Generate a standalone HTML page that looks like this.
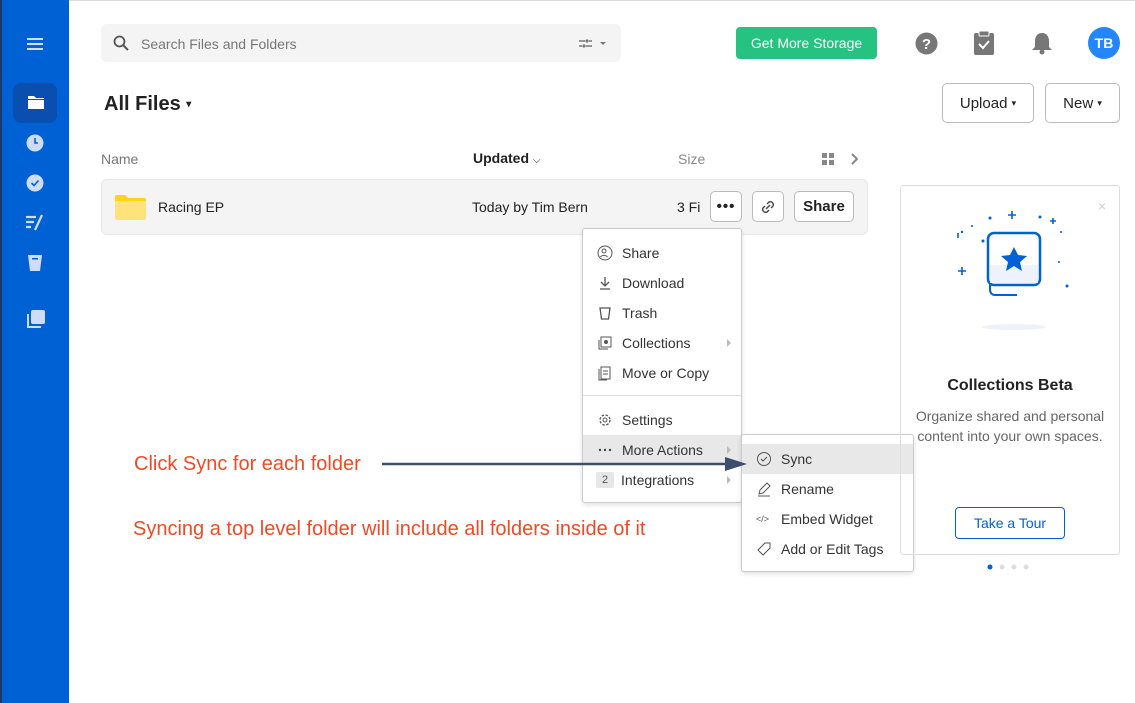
<!DOCTYPE html>
<html><head><meta charset="utf-8"><style>
*{box-sizing:border-box;margin:0;padding:0}
body{width:1135px;height:703px;overflow:hidden;background:#fff;font-family:"Liberation Sans",sans-serif;color:#222;position:relative}
.abs{position:absolute}
.side{left:0;top:0;width:69px;height:703px;background:#0061d5;border-left:2px solid #1a3a6a}
.topline{left:69px;top:0;width:1066px;height:3px;border-top:1px solid #ddd}
.search{left:101px;top:24px;width:520px;height:38px;background:#f4f4f4;border-radius:6px}
.btn{border:1px solid #bbb;border-radius:5px;background:#fff;font-size:15px;display:flex;align-items:center;justify-content:center;color:#222}
.menu{background:#fff;border:1px solid #ccc;border-radius:3px;box-shadow:0 2px 5px rgba(0,0,0,.12)}
.mi{position:absolute;left:0;right:0;height:30px;display:flex;align-items:center;font-size:14px;color:#333}
.mi svg{position:absolute;left:14px}
.mi span{position:absolute;left:39px}
.tri{position:absolute;right:10px;width:0;height:0;border-left:4px solid #bbb;border-top:4px solid transparent;border-bottom:4px solid transparent}
</style></head><body>
<div class="abs side"></div>
<div class="abs topline"></div>
<svg class="abs" style="left:27px;top:38px" width="16" height="13"><rect y="0" width="16" height="2" fill="#cfe0ff"/><rect y="5" width="16" height="2" fill="#cfe0ff"/><rect y="10" width="16" height="2" fill="#cfe0ff"/></svg>
<div class="abs" style="left:13px;top:83px;width:44px;height:40px;background:#0a4eb0;border-radius:8px"></div>
<svg class="abs" style="left:27px;top:94px" width="18" height="16"><path d="M1 2h6l2 2h8v11H1z" fill="#fff"/><rect x="1" y="5" width="16" height="1" fill="#0a4eb0"/></svg>
<svg class="abs" style="left:26px;top:134px" width="18" height="18"><circle cx="9" cy="9" r="8.5" fill="#cfdcf7"/><path d="M9 4v5h3" stroke="#0061d5" stroke-width="1.6" fill="none"/></svg>
<svg class="abs" style="left:26px;top:174px" width="18" height="18"><circle cx="9" cy="9" r="8.5" fill="#cfdcf7"/><path d="M5.5 9l2.5 2.5 4.5-5" stroke="#0061d5" stroke-width="1.6" fill="none"/></svg>
<svg class="abs" style="left:25px;top:214px" width="20" height="18"><path d="M1 3h10M1 8h8M1 13h5M17 1l-7 15" stroke="#cfdcf7" stroke-width="2.2" fill="none"/></svg>
<svg class="abs" style="left:27px;top:254px" width="16" height="18"><path d="M1 1h14l-2 16H3z" fill="#cfdcf7"/><rect x="5" y="4" width="6" height="1.5" fill="#0061d5"/></svg>
<svg class="abs" style="left:26px;top:309px" width="20" height="20"><rect x="5" y="1" width="14" height="14" rx="2" fill="#cfdcf7"/><path d="M2 5v13h13" stroke="#cfdcf7" stroke-width="2" fill="none"/></svg>
<div class="abs search"></div>
<svg class="abs" style="left:113px;top:35px" width="16" height="16"><circle cx="6.5" cy="6.5" r="5" stroke="#555" stroke-width="1.8" fill="none"/><path d="M10 10l5 5" stroke="#555" stroke-width="2"/></svg>
<div class="abs" style="left:141px;top:36px;font-size:14px;color:#777">Search Files and Folders</div>
<svg class="abs" style="left:578px;top:38px" width="30" height="12"><path d="M1 3h6M11 3h3M1 8h3M8 8h6" stroke="#777" stroke-width="1.5"/><circle cx="9" cy="3" r="1.6" fill="#777"/><circle cx="6" cy="8" r="1.6" fill="#777"/><path d="M22 4h6l-3 3z" fill="#777"/></svg>
<div class="abs" style="left:736px;top:27px;width:141px;height:32px;background:#26c281;border-radius:4px;color:#fff;font-size:14px;display:flex;align-items:center;justify-content:center">Get More Storage</div>
<svg class="abs" style="left:915px;top:32px" width="23" height="23"><circle cx="11.5" cy="11.5" r="11" fill="#777"/><text x="11.5" y="17" font-size="15" font-weight="bold" fill="#fff" text-anchor="middle" font-family="Liberation Sans">?</text></svg>
<svg class="abs" style="left:973px;top:30px" width="22" height="26"><rect x="1" y="3" width="20" height="22" rx="2" fill="#777"/><rect x="6" y="1" width="10" height="5" rx="1" fill="#777" stroke="#fff" stroke-width="1"/><path d="M6 14l4 4 6-7" stroke="#fff" stroke-width="2" fill="none"/></svg>
<svg class="abs" style="left:1031px;top:31px" width="22" height="24"><path d="M11 2c-5 0-7 4-7 8v6l-3 3h20l-3-3v-6c0-4-2-8-7-8z" fill="#777"/><circle cx="11" cy="21" r="2.5" fill="#777"/></svg>
<div class="abs" style="left:1088px;top:27px;width:32px;height:32px;border-radius:50%;background:#2486fc;color:#fff;font-size:14px;font-weight:bold;display:flex;align-items:center;justify-content:center">TB</div>
<div class="abs" style="left:104px;top:93px;font-size:20px;font-weight:bold;color:#222">All Files <span style="font-size:10px;vertical-align:middle">▾</span></div>
<div class="abs btn" style="left:942px;top:83px;width:92px;height:40px">Upload&nbsp;<span style="font-size:9px">▾</span></div>
<div class="abs btn" style="left:1045px;top:83px;width:75px;height:40px">New&nbsp;<span style="font-size:9px">▾</span></div>
<div class="abs" style="left:101px;top:151px;font-size:14px;color:#777">Name</div>
<div class="abs" style="left:473px;top:150px;font-size:14px;font-weight:bold;color:#222">Updated <span style="font-weight:normal;font-size:10px">⌵</span></div>
<div class="abs" style="left:678px;top:151px;font-size:14px;color:#888">Size</div>
<svg class="abs" style="left:822px;top:153px" width="40" height="12"><rect x="0" y="0" width="5" height="5" fill="#888"/><rect x="7" y="0" width="5" height="5" fill="#888"/><rect x="0" y="7" width="5" height="5" fill="#888"/><rect x="7" y="7" width="5" height="5" fill="#888"/><path d="M30 1l5 5-5 5" stroke="#888" stroke-width="2" fill="none"/></svg>
<div class="abs" style="left:101px;top:179px;width:767px;height:56px;background:#f4f4f4;border:1px solid #e8e8e8;border-radius:6px"></div>
<svg class="abs" style="left:115px;top:194px" width="31" height="26"><path d="M0 3a2 2 0 012-2h8l3 3h16a2 2 0 012 2v18a2 2 0 01-2 2H2a2 2 0 01-2-2z" fill="#ffe37a"/><path d="M0 3a2 2 0 012-2h8l3 3h16a2 2 0 012 2v1H0z" fill="#ffd31a"/></svg>
<div class="abs" style="left:158px;top:199px;font-size:14px">Racing EP</div>
<div class="abs" style="left:472px;top:199px;font-size:14px">Today by Tim Bern</div>
<div class="abs" style="left:677px;top:199px;font-size:14px">3 Fi</div>
<div class="abs btn" style="left:710px;top:191px;width:32px;height:31px;font-weight:bold;letter-spacing:1px">•••</div>
<div class="abs btn" style="left:752px;top:191px;width:32px;height:31px"><svg width="16" height="16"><path d="M7 5l2-2a3 3 0 014 4l-2 2M9 11l-2 2a3 3 0 01-4-4l2-2M6 10l4-4" stroke="#444" stroke-width="1.4" fill="none"/></svg></div>
<div class="abs btn" style="left:794px;top:191px;width:60px;height:31px;font-weight:bold">Share</div>
<div class="abs menu" style="left:582px;top:228px;width:160px;height:275px">
 <div class="mi" style="top:9px"><svg width="16" height="16"><circle cx="8" cy="8" r="7" stroke="#555" fill="none"/><circle cx="7" cy="6" r="2" stroke="#555" fill="none"/><path d="M3.5 12c1-2 6-2 7 0" stroke="#555" fill="none"/></svg><span>Share</span></div>
 <div class="mi" style="top:39px"><svg width="16" height="16"><path d="M8 2v8M4 7l4 4 4-4M3 14h10" stroke="#555" stroke-width="1.3" fill="none"/></svg><span>Download</span></div>
 <div class="mi" style="top:69px"><svg width="16" height="16"><path d="M3 3h10l-1.5 11h-7z" stroke="#555" stroke-width="1.3" fill="none"/></svg><span>Trash</span></div>
 <div class="mi" style="top:99px"><svg width="16" height="16"><rect x="4" y="2" width="10" height="10" stroke="#555" fill="none"/><path d="M2 5v9h9" stroke="#555" fill="none"/><circle cx="9" cy="7" r="2" fill="#555"/></svg><span>Collections</span><i class="tri"></i></div>
 <div class="mi" style="top:129px"><svg width="16" height="16"><rect x="4" y="2" width="9" height="12" stroke="#555" fill="none"/><path d="M2 4v11h8M6 6h5M6 9h5" stroke="#555" fill="none"/></svg><span>Move or Copy</span></div>
 <div style="position:absolute;left:0;right:0;top:166px;border-top:1px solid #ddd"></div>
 <div class="mi" style="top:176px"><svg width="16" height="16"><circle cx="8" cy="8" r="5" stroke="#555" stroke-width="1.3" fill="none" stroke-dasharray="2.5 1.5"/><circle cx="8" cy="8" r="2" stroke="#555" fill="none"/></svg><span>Settings</span></div>
 <div class="mi" style="top:206px;background:#e8e8e8"><svg width="16" height="16"><circle cx="3" cy="8" r="1.2" fill="#444"/><circle cx="8" cy="8" r="1.2" fill="#444"/><circle cx="13" cy="8" r="1.2" fill="#444"/></svg><span>More Actions</span><i class="tri"></i></div>
 <div class="mi" style="top:236px"><div style="position:absolute;left:13px;width:18px;height:16px;background:#e6e6e6;border-radius:2px;font-size:11px;text-align:center;line-height:16px;color:#555">2</div><span style="left:38px">Integrations</span><i class="tri"></i></div>
</div>
<div class="abs menu" style="left:741px;top:434px;width:173px;height:138px">
 <div class="mi" style="top:9px;background:#e8e8e8"><svg width="16" height="16"><circle cx="8" cy="8" r="6.5" stroke="#555" fill="none"/><path d="M5 8l2 2 4-4" stroke="#555" fill="none"/></svg><span>Sync</span></div>
 <div class="mi" style="top:39px"><svg width="16" height="16"><path d="M3 13l1-4 7-7 3 3-7 7zM2 15h12" stroke="#555" fill="none"/></svg><span>Rename</span></div>
 <div class="mi" style="top:69px"><svg width="16" height="16"><text x="0" y="11" font-size="9" fill="#555" font-family="Liberation Sans">&lt;/&gt;</text></svg><span>Embed Widget</span></div>
 <div class="mi" style="top:99px"><svg width="16" height="16"><path d="M9 2h5v5l-7 7-5-5z" stroke="#555" fill="none"/></svg><span>Add or Edit Tags</span></div>
</div>
<div class="abs" style="left:134px;top:453px;font-size:20px;color:#f04a24">Click Sync for each folder</div>
<svg class="abs" style="left:380px;top:455px" width="370" height="18"><path d="M2 9h345" stroke="#3c4d6e" stroke-width="2.5"/><path d="M345 2l22 7-22 7z" fill="#3c4d6e"/></svg>
<div class="abs" style="left:133px;top:518px;font-size:20px;color:#f04a24">Syncing a top level folder will include all folders inside of it</div>
<div class="abs" style="left:900px;top:185px;width:220px;height:370px;border:1px solid #ddd;border-radius:3px"></div>
<div class="abs" style="left:1098px;top:198px;font-size:14px;color:#ccc">×</div>
<svg class="abs" style="left:950px;top:205px" width="130" height="130">
 <path d="M40 70v15a5 5 0 005 5h22" stroke="#0061d5" stroke-width="2" fill="none"/>
 <rect x="38" y="28" width="52" height="52" rx="6" stroke="#0061d5" stroke-width="2.5" fill="#fff"/>
 <rect x="40" y="60" width="48" height="18" fill="#eef2fa"/>
 <path d="M64 42l4 8 9 1-7 6 2 9-8-5-8 5 2-9-7-6 9-1z" fill="#0061d5"/>
 <g fill="#0061d5"><circle cx="40" cy="13" r="1.5"/><circle cx="90" cy="12" r="1.5"/><circle cx="33" cy="36" r="1.5"/><circle cx="12" cy="27" r="1.2"/><circle cx="109" cy="57" r="1"/><circle cx="117" cy="81" r="1.5"/><circle cx="22" cy="21" r="1"/><circle cx="111" cy="27" r="1"/></g>
 <path d="M62 6v8M58 10h8M103 13v6M100 16h6M12 62v8M8 66h8M8 28v5" stroke="#0061d5" stroke-width="1.6"/>
 <ellipse cx="64" cy="122" rx="32" ry="3" fill="#eef1fb"/>
</svg>
<div class="abs" style="left:900px;top:377px;width:220px;text-align:center;font-size:16px;font-weight:bold;color:#222">Collections Beta</div>
<div class="abs" style="left:900px;top:406px;width:220px;text-align:center;font-size:14px;line-height:20px;color:#666">Organize shared and personal<br>content into your own spaces.</div>
<div class="abs" style="left:955px;top:507px;width:110px;height:32px;border:1px solid #0061d5;border-radius:4px;color:#0061d5;font-size:14px;display:flex;align-items:center;justify-content:center">Take a Tour</div>
<svg class="abs" style="left:985px;top:563px" width="50" height="8"><circle cx="5" cy="4" r="2.5" fill="#0061d5"/><circle cx="17" cy="4" r="2.5" fill="#ddd"/><circle cx="29" cy="4" r="2.5" fill="#ddd"/><circle cx="41" cy="4" r="2.5" fill="#ddd"/></svg>
</body></html>
